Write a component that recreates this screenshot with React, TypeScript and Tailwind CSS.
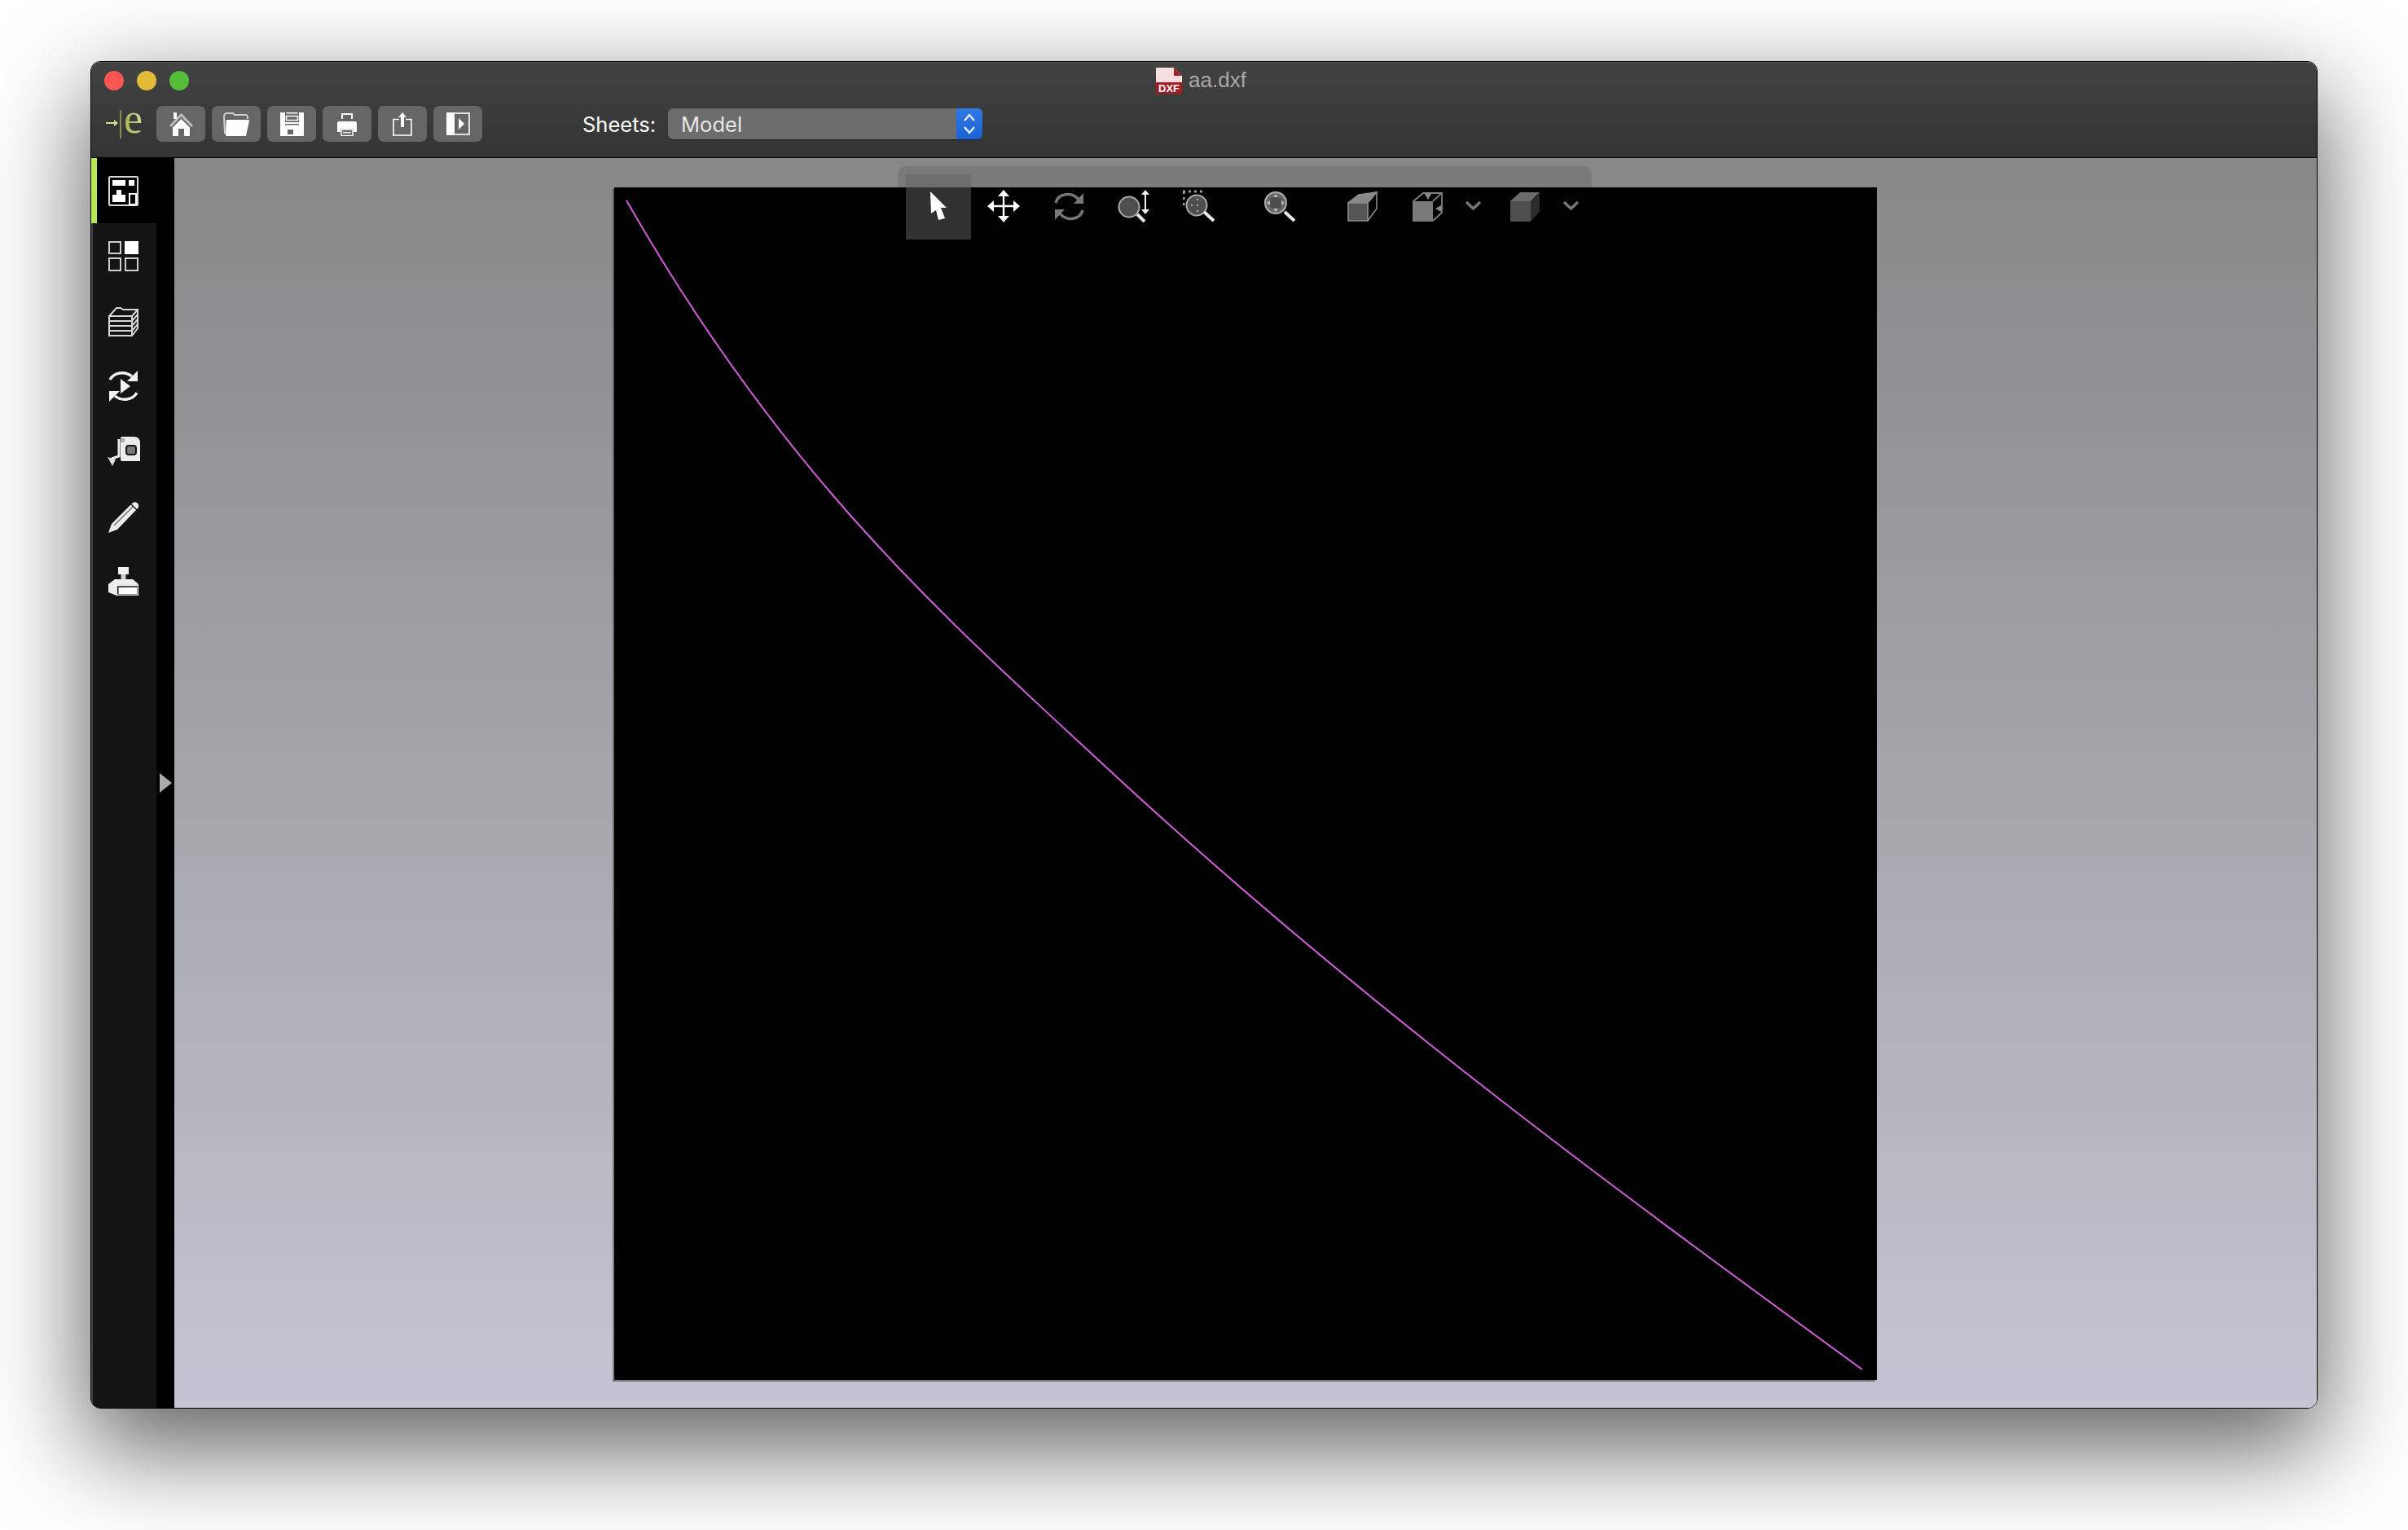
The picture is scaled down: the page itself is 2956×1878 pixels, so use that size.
const curve = "M15 16 C211 359 406 528 602 710 C912 998 1222 1225 1532 1451";

const HomeIcon = () => (
  <svg viewBox="0 0 29 29" className="w-[29px] h-[29px]">
    <path d="M1 17 L14.5 3 L28 17" fill="none" stroke="#bdbdbd" strokeWidth="3" />
    <rect x="5" y="0" width="4" height="8" fill="#fff" />
    <path d="M14.5 8 L25 18.5 V29 H18 V20 H11 V29 H4 V18.5 Z" fill="#fff" />
  </svg>
);

const FolderIcon = () => (
  <svg viewBox="0 0 32 29" className="w-[32px] h-[29px]">
    <path d="M2 26 L1 6 Q1 1 4 1 H12 L14 3 H27 Q30 3 30 6 V8" fill="none" stroke="#cfcfcf" strokeWidth="2" />
    <path d="M3 29 L3.5 10 Q3.5 9 5 9 H31 Q32 9 32 10 L28 29 Z" fill="#fff" />
  </svg>
);

const SaveIcon = () => (
  <svg viewBox="0 0 29 29" className="w-[29px] h-[29px]">
    <rect width="29" height="29" fill="#fff" />
    <rect x="6" y="0" width="17" height="12" fill="#666" />
    <rect x="7.5" y="4.5" width="14" height="5" fill="none" stroke="#fff" strokeWidth="1.5" />
    <rect x="7.5" y="0" width="14" height="1.5" fill="#fff" />
    <rect x="9" y="21" width="7" height="6" fill="#666" />
    <rect x="6" y="14" width="17" height="1.5" fill="#666" />
  </svg>
);

const PrintIcon = () => (
  <svg viewBox="0 0 24 29" className="w-[24px] h-[29px]">
    <path d="M5 1 H19 V8 H17 V3 H7 V8 H5 Z" fill="#fff" />
    <path d="M2 11 H22 Q24 11 24 13 V24 H20 V20 H4 V24 H0 V13 Q0 11 2 11 Z" fill="#fff" />
    <rect x="5" y="21" width="14" height="7.5" fill="none" stroke="#fff" strokeWidth="1.5" />
    <rect x="7" y="24" width="10" height="1.3" fill="#fff" />
  </svg>
);

const ShareIcon = () => (
  <svg viewBox="0 0 24 29" className="w-[24px] h-[29px]">
    <path d="M8 8.5 H1 V28 H23 V8.5 H16" fill="none" stroke="#fff" strokeWidth="1.6" />
    <path d="M12 0 L17 6 H14 V18 H10 V6 H7 Z" fill="#fff" />
  </svg>
);

const PanelIcon = () => (
  <svg viewBox="0 0 29 28" className="w-[29px] h-[28px]">
    <rect x="1" y="1" width="27" height="26" fill="none" stroke="#fff" strokeWidth="1.6" />
    <rect x="0" y="0" width="10" height="28" fill="#fff" />
    <path d="M15 7 L22 14 L15 21 Z" fill="#fff" />
  </svg>
);

const ReportIcon = () => (
  <svg viewBox="0 0 37 37" className="w-[37px] h-[37px]">
    <rect x="1" y="1" width="35" height="35" rx="1" fill="none" stroke="#d8d8d8" strokeWidth="2" />
    <rect x="5" y="5" width="16" height="7" fill="#fff" />
    <rect x="25" y="5" width="7" height="7" fill="#fff" />
    <path d="M10 17 H16 V23 H21 V32 H5 V23 H10 Z" fill="#fff" />
    <rect x="26" y="22" width="8" height="13" fill="none" stroke="#fff" strokeWidth="2" />
  </svg>
);

const GridIcon = () => (
  <svg viewBox="0 0 37 37" className="w-[37px] h-[37px]">
    <rect x="1" y="1" width="14" height="14" fill="none" stroke="#cfcfcf" strokeWidth="2" />
    <rect x="20" y="0" width="17" height="16" fill="#fff" />
    <rect x="1" y="21" width="14" height="15" fill="none" stroke="#cfcfcf" strokeWidth="2" />
    <rect x="21" y="21" width="15" height="15" fill="none" stroke="#cfcfcf" strokeWidth="2" />
  </svg>
);

const SheetsIcon = () => (
  <svg viewBox="0 0 37 37" className="w-[37px] h-[37px]" fill="none" stroke="#d6d6d6" strokeWidth="2">
    <path d="M1 36 V12 L10 2 H15 L18 4 L36 4 V27 L29 36 Z" />
    <path d="M1 12 H29 V36 M1 18 H29 M1 24 H29 M1 30 H29 M29 12 L36 4 M29 18 L36 10 M29 24 L36 16 M29 30 L36 22" />
  </svg>
);

const SyncPlayIcon = () => (
  <svg viewBox="0 0 37 38" className="w-[37px] h-[38px]">
    <path d="M2 11 C7 2 20 0 29 7" fill="none" stroke="#f2f2f2" strokeWidth="3.4" />
    <path d="M36 0 V13 H23 Z" fill="#f2f2f2" />
    <path d="M35 27 C30 36 17 38 8 31" fill="none" stroke="#f2f2f2" strokeWidth="3.4" />
    <path d="M1 38 V25 H14 Z" fill="#f2f2f2" />
    <path d="M15 10 L27 19 L15 28 Z" fill="#f2f2f2" />
  </svg>
);

const TapeIcon = () => (
  <svg viewBox="0 0 40 36" className="w-[40px] h-[36px]">
    <path d="M18 0 H32 Q40 0 40 8 V30 H18 Q16 30 16 28 V2 Q16 0 18 0 Z" fill="#ececec" />
    <rect x="23" y="11" width="12" height="11" rx="3" fill="#777" stroke="#141414" strokeWidth="2" />
    <path d="M14 3 V24 L5 27" fill="none" stroke="#ececec" strokeWidth="3" />
    <path d="M0 25 L6 36 L10 28 Z" fill="#ddd" />
    <rect x="16" y="2" width="5" height="5" fill="#aaa" />
  </svg>
);

const PencilIcon = () => (
  <svg viewBox="0 0 38 39" className="w-[38px] h-[39px]">
    <path d="M0 39 L4 28 L29 3 Q32 0 35 2 Q39 5 36 9 L11 35 Z" fill="#ececec" />
    <path d="M7 30 L31 6" stroke="#777" strokeWidth="1.6" />
    <path d="M27 3 L35 11" stroke="#141414" strokeWidth="1.5" />
  </svg>
);

const StampIcon = () => (
  <svg viewBox="0 0 37 37" className="w-[37px] h-[37px]">
    <rect x="12" y="0" width="13" height="9" fill="#f2f2f2" />
    <rect x="15.5" y="9" width="6" height="8" fill="#cfcfcf" />
    <path d="M0 21 L8 15 H30 L37 21 V35 H10 L0 31 Z" fill="#ececec" />
    <rect x="11.5" y="24" width="24" height="9" fill="#141414" stroke="#141414" />
    <rect x="12.5" y="25" width="23" height="8" fill="#fff" />
  </svg>
);

const PointerIcon = () => (
  <svg viewBox="0 0 20 36" className="w-[20px] h-[36px]">
    <path d="M0 0 L20 20 L13 20 L18 33 L10 35 L7 23 L1 27 Z" fill="#fff" />
  </svg>
);

const MoveIcon = () => (
  <svg viewBox="0 0 40 40" className="w-[40px] h-[40px]">
    <path d="M20 4 V36 M4 20 H36" stroke="#fff" strokeWidth="2.4" />
    <path d="M20 0 L27 8 H13 Z M20 40 L27 32 H13 Z M0 20 L8 13 V27 Z M40 20 L32 13 V27 Z" fill="#fff" />
  </svg>
);

const RotateIcon = () => (
  <svg viewBox="0 0 37 37" className="w-[37px] h-[37px]">
    <path d="M2 14 C5 2 22 0 30 10" fill="none" stroke="#777" strokeWidth="3.4" />
    <path d="M36 2 V15 H24 Z" fill="#777" />
    <path d="M35 23 C32 35 15 37 7 27" fill="none" stroke="#777" strokeWidth="3.4" />
    <path d="M1 35 V22 H13 Z" fill="#777" />
  </svg>
);

const ZoomVIcon = () => (
  <svg viewBox="0 0 40 40" className="w-[40px] h-[40px]">
    <circle cx="14" cy="21" r="12.5" fill="#4e4e4e" stroke="#aaa" strokeWidth="2" />
    <path d="M24 30 L33 39" stroke="#e8e8e8" strokeWidth="4" />
    <path d="M34 4 V26" stroke="#eee" strokeWidth="2" />
    <path d="M34 0 L39 6 H29 Z M34 30 L39 24 H29 Z" fill="#eee" />
  </svg>
);

const ZoomWindowIcon = () => (
  <svg viewBox="0 0 40 40" className="w-[40px] h-[40px]">
    <circle cx="17" cy="19" r="12.5" fill="#4e4e4e" stroke="#aaa" strokeWidth="2" />
    <path d="M26 27 L38 38" stroke="#e8e8e8" strokeWidth="4" />
    <path d="M0 2 H24 M1 2 V22" stroke="#999" strokeWidth="3" strokeDasharray="3 4" fill="none" />
    <path d="M17 19 h2 M10 19 h2 M17 12 h2 M17 26 h2" stroke="#aaa" strokeWidth="2" />
  </svg>
);

const ZoomFitIcon = () => (
  <svg viewBox="0 0 40 40" className="w-[40px] h-[40px]">
    <circle cx="14" cy="16" r="13" fill="#666" stroke="#b0b0b0" strokeWidth="2" />
    <circle cx="14" cy="16" r="8" fill="#4e4e4e" />
    <path d="M14 5 L17 9 H11 Z M14 27 L17 23 H11 Z M3 16 L7 13 V19 Z M25 16 L21 13 V19 Z" fill="#bbb" />
    <path d="M25 27 L37 38" stroke="#e8e8e8" strokeWidth="4" />
  </svg>
);

const CubeOutlineIcon = () => (
  <svg viewBox="0 0 37 37" className="w-[37px] h-[37px]" stroke="#8a8a8a" strokeWidth="1.6">
    <path d="M1 14 L14 4 L36 1 L25 14 Z" fill="#888" />
    <path d="M25 14 L36 1 L36 21 L25 36 Z" fill="#000" />
    <rect x="1" y="14" width="24" height="22" fill="#555" />
  </svg>
);

const CubeArrowsIcon = () => (
  <svg viewBox="0 0 37 37" className="w-[37px] h-[37px]">
    <path d="M1 12 L13 2 H36 L25 12 M25 36 L36 26 V2" fill="none" stroke="#808080" strokeWidth="1.8" />
    <rect x="0" y="12" width="25" height="25" fill="#7a7a7a" />
    <path d="M15 3 H23 L19 10 Z M35 17 V25 L28 21 Z" fill="#8a8a8a" />
    <path d="M19 1 V6 M36 21 H31" stroke="#8a8a8a" strokeWidth="2" />
  </svg>
);

const CubeSolidIcon = () => (
  <svg viewBox="0 0 37 37" className="w-[37px] h-[37px]">
    <path d="M0 12 L12 1 H36 L25 12 Z" fill="#6c6c6c" />
    <path d="M25 12 L36 1 V25 L25 37 Z" fill="#2c2c2c" />
    <rect x="0" y="12" width="25" height="25" fill="#4e4e4e" />
  </svg>
);

const Chevron = () => (
  <svg viewBox="0 0 21 13" className="w-[21px] h-[13px]">
    <path d="M2 2 L10.5 10 L19 2" fill="none" stroke="#777" strokeWidth="3.4" />
  </svg>
);

const DxfIcon = () => (
  <svg viewBox="0 0 32 32" className="w-[32px] h-[32px]">
    <path d="M0 0 H22 L32 10 V32 H0 Z" fill="#f5dfe1" />
    <path d="M22 0 L32 10 H22 Z" fill="#a51c24" />
    <rect x="0" y="18" width="32" height="14" fill="#a51c24" />
    <text x="16" y="30" textAnchor="middle" fontSize="13" fontWeight="700" fill="#fff" fontFamily="Liberation Sans, sans-serif">DXF</text>
  </svg>
);

const sideItems = [GridIcon, SheetsIcon, SyncPlayIcon, TapeIcon, PencilIcon, StampIcon];
const topButtons = [HomeIcon, FolderIcon, SaveIcon, PrintIcon, ShareIcon, PanelIcon];

const Slot = ({ children, className = "" }: { children: React.ReactNode; className?: string }) => (
  <div className={`w-[80px] h-[80px] flex items-center justify-center pb-[2px] ${className}`}>{children}</div>
);

const Arrow = ({ children }: { children: React.ReactNode }) => (
  <div className="w-[32px] h-[80px] flex items-center justify-center pb-[4px]">{children}</div>
);

export default function App() {
  return (
    <div className="w-[2956px] h-[1878px] bg-white pl-[111px] pt-[75px] font-['Inter','Liberation_Sans',sans-serif] overflow-hidden">
      <div className="w-[2734px] h-[1654px] flex flex-col rounded-[12px] overflow-hidden border border-black shadow-[0_44px_120px_6px_rgba(0,0,0,0.62)]">
        <header className="h-[118px] shrink-0 flex flex-col border-b border-t border-b-black border-t-[#5c5c5c] bg-gradient-to-b from-[#424242] to-[#343434]">
          <div className="grid grid-cols-[1fr_auto_1fr] items-center h-[43px]">
            <div className="flex gap-[16px] pl-[16px]">
              <span className="w-[24px] h-[24px] rounded-full bg-[#fc5753]" />
              <span className="w-[24px] h-[24px] rounded-full bg-[#e4bb39]" />
              <span className="w-[24px] h-[24px] rounded-full bg-[#55bd3a]" />
            </div>
            <div className="flex items-center gap-[8px] pr-[7px] text-[26px] text-[#a9a9a9] font-['Liberation_Sans',sans-serif]">
              <DxfIcon />
              <span>aa.dxf</span>
            </div>
            <div />
          </div>
          <div className="flex items-center mt-[10px] pl-[18px]">
            <div className="w-[44px] h-[44px] flex items-center mr-[18px]">
              <svg viewBox="0 0 20 36" className="w-[20px] h-[36px] shrink-0">
                <path d="M0 17 H11" stroke="#d5dc8c" strokeWidth="2" />
                <path d="M10 13 L15 17 L10 21 Z" fill="#d5dc8c" />
                <path d="M18 1 V36" stroke="#a9b44a" strokeWidth="1.4" />
              </svg>
              <span className="ml-[2px] text-[52px] leading-[40px] mb-[12px] font-['Liberation_Serif',serif] bg-gradient-to-r from-[#a8b545] to-[#d5d99a] bg-clip-text text-transparent">e</span>
            </div>
            <div className="flex gap-[8px]">
              {topButtons.map((Icon, i) => (
                <button key={i} className="w-[60px] h-[44px] rounded-[7px] bg-[#666] flex items-center justify-center">
                  <Icon />
                </button>
              ))}
            </div>
            <span className="ml-[123px] pt-[2px] text-[25.5px] leading-none text-white">Sheets:</span>
            <div className="ml-[15px] w-[386px] h-[38px] rounded-[6px] overflow-hidden flex bg-[#6c6c6c] shadow-[0_1px_1px_rgba(0,0,0,0.4)]">
              <span className="flex-1 pl-[16px] pt-[1px] text-[25.5px] leading-[38px] text-[#e6e6e6]">Model</span>
              <div className="w-[32px] bg-gradient-to-b from-[#2e78e6] to-[#1c62d2] flex items-center justify-center">
                <svg viewBox="0 0 18 30" className="w-[18px] h-[30px]">
                  <path d="M3 11 L9 4 L15 11 M3 19 L9 26 L15 19" fill="none" stroke="#e8efff" strokeWidth="2.4" />
                </svg>
              </div>
            </div>
          </div>
        </header>

        <div className="flex-1 flex min-h-0">
          <aside className="w-[102px] shrink-0 flex bg-black">
            <div className="w-[80px] flex flex-col">
              <div className="h-[80px] flex items-center justify-center pr-[8px] border-l-[7px] border-[#b5e853]">
                <ReportIcon />
              </div>
              <div className="flex-1 border-l-2 border-[#444] bg-[#141414] flex flex-col">
                {sideItems.map((Icon, i) => (
                  <div key={i} className="h-[80px] flex items-center justify-center pr-[3px]">
                    <Icon />
                  </div>
                ))}
              </div>
            </div>
            <div className="flex-1 flex items-center justify-center">
              <div className="w-0 h-0 border-y-[12px] border-y-transparent border-l-[15px] border-l-[#aaa]" />
            </div>
          </aside>

          <main className="relative flex-1 flex items-center justify-center bg-gradient-to-b from-[#878787] to-[#c3c6d2]">
            <div className="mt-[2px] w-[1550px] h-[1464px] bg-black shadow-[-2px_2px_0_rgba(0,0,0,0.35)]">
              <svg viewBox="0 0 1550 1464" className="w-full h-full">
                <path d={curve} fill="none" stroke="#cf5fd6" strokeWidth="2" />
              </svg>
            </div>
            {/* floating view toolbar */}
            <div className="absolute top-[10px] left-[888px] w-[852px] h-[100px] rounded-[10px] bg-black/10 p-[10px] flex">
              <Slot className="bg-[#626262]/50"><PointerIcon /></Slot>
              <Slot><MoveIcon /></Slot>
              <Slot><RotateIcon /></Slot>
              <Slot><ZoomVIcon /></Slot>
              <Slot><ZoomWindowIcon /></Slot>
              <Slot className="ml-[20px]"><ZoomFitIcon /></Slot>
              <Slot className="ml-[20px]"><CubeOutlineIcon /></Slot>
              <Slot><CubeArrowsIcon /></Slot>
              <Arrow><Chevron /></Arrow>
              <Slot className="ml-[8px]"><CubeSolidIcon /></Slot>
              <Arrow><Chevron /></Arrow>
            </div>
          </main>
        </div>
      </div>
    </div>
  );
}
